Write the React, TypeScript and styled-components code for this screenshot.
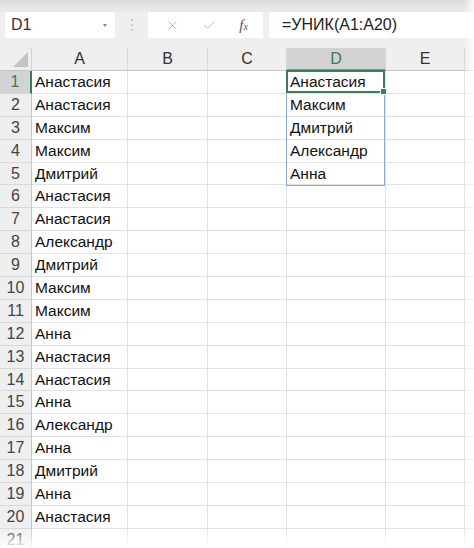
import React from 'react';
import styled, { createGlobalStyle } from 'styled-components';
import { X, Check } from 'lucide-react';

const GlobalStyle = createGlobalStyle`
  html, body { margin: 0; padding: 0; background: #ffffff; }
  body { font-family: "Liberation Sans", Arial, sans-serif; }
`;

const ROW_H = 22.9;

const Frame = styled.div`
  position: relative;
  width: 474px;
  height: 548px;
  overflow: hidden;
  background: #efefef;
  display: flex;
  flex-direction: column;
`;

const TopBand = styled.div`
  height: 12px;
  background: linear-gradient(#dcdcdc, #ebebeb);
  flex: none;
`;

const FormulaBar = styled.div`
  display: flex;
  align-items: stretch;
  height: 26px;
  padding-left: 5px;
  flex: none;
`;

const NameBox = styled.div`
  width: 110px;
  background: #fff;
  display: flex;
  align-items: center;
  justify-content: space-between;
  padding: 0 8px 0 6px;
  box-sizing: border-box;
  font-size: 16px;
  color: #333;
`;

const Caret = styled.span`
  width: 0;
  height: 0;
  border-left: 2.5px solid transparent;
  border-right: 2.5px solid transparent;
  border-top: 3px solid #888;
`;

const Grip = styled.div`
  width: 33px;
  display: flex;
  flex-direction: column;
  align-items: center;
  justify-content: center;
  gap: 3px;
  & > i {
    width: 2px;
    height: 2px;
    background: #bdbdbd;
    border-radius: 1px;
  }
`;

const ActionBox = styled.div`
  width: 115px;
  background: #fff;
  display: flex;
  align-items: center;
  justify-content: space-around;
  padding: 0 4px 0 6px;
  box-sizing: border-box;
  color: #b5b5b5;
`;

const Fx = styled.span`
  font-family: "Liberation Serif", "Times New Roman", serif;
  font-style: italic;
  font-size: 15px;
  color: #555;
  & > small { font-size: 10px; }
`;

const FormulaInput = styled.div`
  flex: 1;
  margin-left: 6px;
  background: #fff;
  display: flex;
  align-items: center;
  padding-left: 13px;
  font-size: 16px;
  color: #222;
`;

const Gap = styled.div`
  height: 10px;
  flex: none;
`;

const Sheet = styled.div`
  display: grid;
  grid-template-columns: 32px 96px 80px 79px 99px 79px 40px;
  grid-template-rows: 23px repeat(21, ${ROW_H}px);
  background: #fff;
  flex: 1;
`;

const Corner = styled.div`
  background: #efefef;
  border-right: 1px solid #d4d4d4;
  border-bottom: 1px solid #c6c6c6;
  position: relative;
  &::after {
    content: '';
    position: absolute;
    right: 3px;
    bottom: 3px;
    width: 0;
    height: 0;
    border-left: 15px solid transparent;
    border-bottom: 15px solid #c4c4c4;
  }
`;

const ColHead = styled.div<{ $active?: boolean }>`
  background: ${p => (p.$active ? '#d3d3d3' : '#efefef')};
  border-right: 1px solid #d8d8d8;
  border-bottom: ${p => (p.$active ? '2px solid #6f9a80' : '1px solid #c6c6c6')};
  box-sizing: border-box;
  display: flex;
  align-items: center;
  justify-content: center;
  font-size: 16px;
  color: ${p => (p.$active ? '#3d7a55' : '#333')};
`;

const RowHead = styled.div<{ $active?: boolean }>`
  background: ${p => (p.$active ? '#d3d3d3' : '#efefef')};
  border-right: ${p => (p.$active ? '2px solid #3d7a55' : '1px solid #c6c6c6')};
  border-bottom: 1px solid #d8d8d8;
  box-sizing: border-box;
  display: flex;
  align-items: center;
  justify-content: center;
  font-size: 16px;
  color: ${p => (p.$active ? '#3d7a55' : '#444')};
`;

const Cell = styled.div<{ $anchor?: boolean }>`
  position: ${p => (p.$anchor ? 'relative' : 'static')};
  z-index: ${p => (p.$anchor ? 2 : 'auto')};
  border-right: 1px solid #e1e1e1;
  border-bottom: 1px solid #e1e1e1;
  box-sizing: border-box;
  display: flex;
  align-items: center;
  padding-left: 3px;
  font-size: 15.5px;
  color: #111;
  white-space: nowrap;
`;

const SpillRange = styled.div`
  position: absolute;
  top: -1px;
  left: -1px;
  width: calc(100% + 1px);
  height: ${ROW_H * 5 + 1}px;
  border: 1px solid #8fa6cf;
  box-sizing: border-box;
  pointer-events: none;
`;

const ActiveCell = styled.div`
  position: absolute;
  top: -1px;
  left: -1px;
  width: calc(100% + 1px);
  height: calc(100% + 1px);
  border: 2px solid #3e7d58;
  box-sizing: border-box;
  pointer-events: none;
  &::after {
    content: '';
    position: absolute;
    right: -4px;
    bottom: -4px;
    width: 5px;
    height: 5px;
    background: #3e7d58;
    border: 1px solid #fff;
  }
`;

const FadeRight = styled.div`
  position: absolute;
  top: 0;
  right: 0;
  width: 10px;
  height: 100%;
  background: linear-gradient(to right, rgba(255, 255, 255, 0), rgba(255, 255, 255, 0.85));
  pointer-events: none;
`;

const FadeBottom = styled.div`
  position: absolute;
  left: 0;
  bottom: 0;
  width: 100%;
  height: 20px;
  background: linear-gradient(rgba(255, 255, 255, 0), rgba(255, 255, 255, 0.95));
  pointer-events: none;
`;

const names = [
  'Анастасия', 'Анастасия', 'Максим', 'Максим', 'Дмитрий',
  'Анастасия', 'Анастасия', 'Александр', 'Дмитрий', 'Максим',
  'Максим', 'Анна', 'Анастасия', 'Анастасия', 'Анна',
  'Александр', 'Анна', 'Дмитрий', 'Анна', 'Анастасия',
];
const unique = ['Анастасия', 'Максим', 'Дмитрий', 'Александр', 'Анна'];
const cols = ['A', 'B', 'C', 'D', 'E', ''];

export default function App() {
  return (
    <>
      <GlobalStyle />
      <Frame>
        <TopBand />
        <FormulaBar>
          <NameBox>
            D1
            <Caret />
          </NameBox>
          <Grip>
            <i />
            <i />
            <i />
          </Grip>
          <ActionBox>
            <X size={15} strokeWidth={1.4} />
            <Check size={15} strokeWidth={1.4} />
            <Fx>
              f<small>x</small>
            </Fx>
          </ActionBox>
          <FormulaInput>=УНИК(A1:A20)</FormulaInput>
        </FormulaBar>
        <Gap />
        <Sheet>
          <Corner />
          {cols.map(c => (
            <ColHead key={c || 'F'} $active={c === 'D'}>
              {c}
            </ColHead>
          ))}
          {Array.from({ length: 21 }, (_, r) => (
            <React.Fragment key={r}>
              <RowHead $active={r === 0}>{r + 1}</RowHead>
              <Cell>{names[r] ?? ''}</Cell>
              <Cell />
              <Cell />
              <Cell $anchor={r === 0}>
                {unique[r] ?? ''}
                {r === 0 && (
                  <>
                    <SpillRange />
                    <ActiveCell />
                  </>
                )}
              </Cell>
              <Cell />
              <Cell />
            </React.Fragment>
          ))}
        </Sheet>
        <FadeRight />
        <FadeBottom />
      </Frame>
    </>
  );
}
